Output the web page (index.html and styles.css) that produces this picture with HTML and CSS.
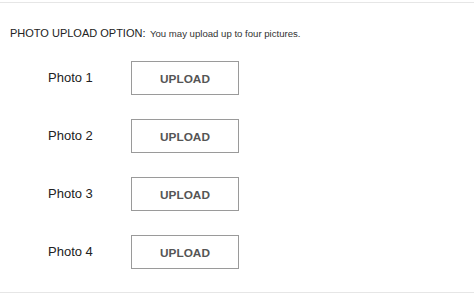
FILE: index.html
```html
<!DOCTYPE html>
<html>
<head>
<meta charset="utf-8">
<link rel="stylesheet" href="styles.css">
</head>
<body>
<div class="panel">
  <p class="intro"><span class="intro-title">PHOTO UPLOAD OPTION:</span> <span class="intro-note">You may upload up to four pictures.</span></p>
  <div class="rows">
    <div class="row"><span class="label">Photo 1</span><button class="upload">UPLOAD</button></div>
    <div class="row"><span class="label">Photo 2</span><button class="upload">UPLOAD</button></div>
    <div class="row"><span class="label">Photo 3</span><button class="upload">UPLOAD</button></div>
    <div class="row"><span class="label">Photo 4</span><button class="upload">UPLOAD</button></div>
  </div>
</div>
</body>
</html>
```
FILE: styles.css
```css
html, body {
  margin: 0;
  padding: 0;
  background: #ffffff;
}
body {
  font-family: "Liberation Sans", Arial, sans-serif;
  color: #222222;
}
.panel {
  margin-top: 2px;
  height: 288px;
  border-top: 1px solid #e6e6e6;
  border-bottom: 1px solid #e6e6e6;
  padding-top: 1px;
  box-sizing: content-box;
}
.intro {
  margin: 21px 0 0 10px;
  line-height: 13px;
  white-space: nowrap;
}
.intro-title {
  font-size: 11px;
  color: #222;
}
.intro-note {
  font-size: 9.6px;
  color: #333;
}
.rows {
  display: flex;
  flex-direction: column;
  gap: 24px;
  margin-top: 21px;
  padding-left: 48px;
}
.row {
  display: flex;
  align-items: center;
  height: 34px;
}
.label {
  width: 83px;
  font-size: 13px;
  color: #222;
  padding-bottom: 1px;
}
.upload {
  width: 108px;
  height: 34px;
  box-sizing: border-box;
  border: 1px solid #9a9a9a;
  background: #ffffff;
  font-family: "Liberation Sans", Arial, sans-serif;
  font-size: 11.8px;
  font-weight: bold;
  color: #555555;
  padding: 1px 0 0 0;
  margin: 0;
}
```
